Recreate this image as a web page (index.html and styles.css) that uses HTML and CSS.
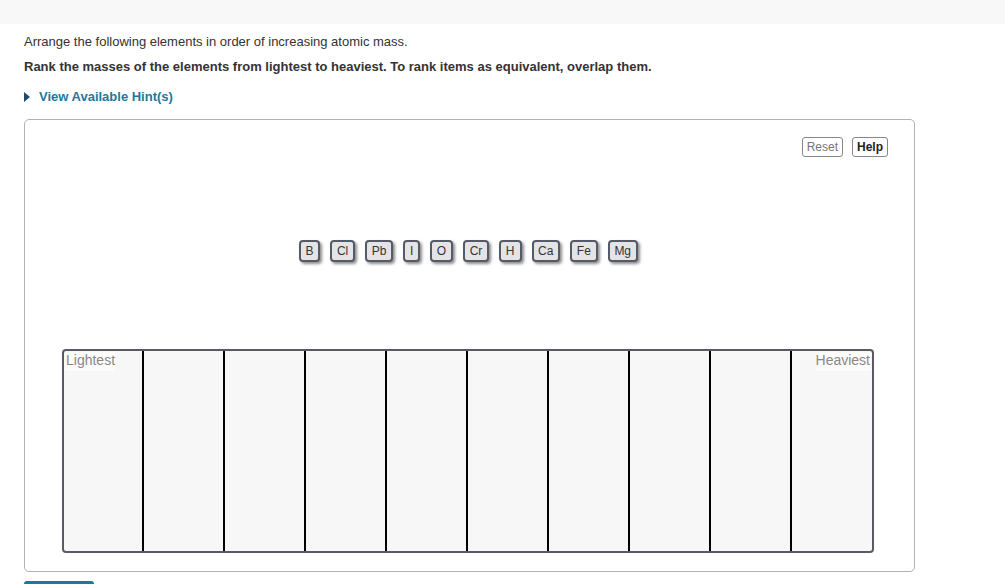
FILE: index.html
```html
<!DOCTYPE html>
<html>
<head>
<meta charset="utf-8">
<link rel="stylesheet" href="styles.css">
</head>
<body>
<div class="topbar"></div>
<div class="content">
  <p class="intro">Arrange the following elements in order of increasing atomic mass.</p>
  <p class="task">Rank the masses of the elements from lightest to heaviest. To rank items as equivalent, overlap them.</p>
  <div class="hint"><span class="tri"></span><span>View Available Hint(s)</span></div>
  <div class="panel">
    <div class="tools">
      <button class="btn reset">Reset</button>
      <button class="btn help">Help</button>
    </div>
    <div class="tiles">
      <span class="tile">B</span>
      <span class="tile">Cl</span>
      <span class="tile">Pb</span>
      <span class="tile">I</span>
      <span class="tile">O</span>
      <span class="tile">Cr</span>
      <span class="tile">H</span>
      <span class="tile">Ca</span>
      <span class="tile">Fe</span>
      <span class="tile">Mg</span>
    </div>
    <div class="rank">
      <div class="cell"><span class="lbl">Lightest</span></div>
      <div class="cell"></div>
      <div class="cell"></div>
      <div class="cell"></div>
      <div class="cell"></div>
      <div class="cell"></div>
      <div class="cell"></div>
      <div class="cell"></div>
      <div class="cell"></div>
      <div class="cell last"><span class="lbl right">Heaviest</span></div>
    </div>
  </div>
  <div class="submit"></div>
</div>
</body>
</html>
```

FILE: styles.css
```css
html, body {
  margin: 0;
  padding: 0;
  background: #fff;
  font-family: "Liberation Sans", Arial, sans-serif;
  color: #333;
  overflow: hidden;
}
.topbar {
  height: 24px;
  background: #f8f8f8;
}
.content {
  padding-left: 24px;
}
.intro {
  margin: 10px 0 0 0;
  font-size: 13px;
  line-height: 16px;
}
.task {
  margin: 9px 0 0 0;
  font-size: 13px;
  font-weight: bold;
  line-height: 16px;
}
.hint {
  margin-top: 14px;
  display: flex;
  align-items: center;
  gap: 9px;
  color: #1b7a9c;
  font-weight: bold;
  font-size: 13px;
  line-height: 16px;
}
.tri {
  width: 0;
  height: 0;
  border-top: 5px solid transparent;
  border-bottom: 5px solid transparent;
  border-left: 6px solid #1d4d6d;
}
.panel {
  margin-top: 14px;
  width: 889px;
  height: 451px;
  border: 1px solid #b3b3b3;
  border-radius: 5px;
  display: flex;
  flex-direction: column;
  align-items: center;
}
.tools {
  align-self: flex-end;
  margin: 17px 26px 0 0;
  display: flex;
  gap: 9px;
}
.btn {
  height: 20px;
  padding: 0 4px;
  border: 1px solid #888;
  border-radius: 3px;
  background: #fff;
  font-family: "Liberation Sans", Arial, sans-serif;
  font-size: 12px;
  font-weight: bold;
  line-height: 18px;
}
.reset { color: #777; font-weight: normal; }
.help { color: #222; }
.tiles {
  margin-top: 83px;
  display: flex;
  gap: 10px;
  margin-left: -2px;
}
.tile {
  display: inline-block;
  height: 18px;
  padding: 0 5px 0 4.5px;
  border: 2px solid #555a68;
  border-radius: 4px;
  background: #e4e4e4;
  font-size: 12px;
  line-height: 18px;
  color: #333;
  box-shadow: 2px 2px 3px rgba(0,0,0,0.45);
}
.rank {
  margin-top: 87px;
  width: 808px;
  height: 200px;
  border: 2px solid #5a5a66;
  border-radius: 4px;
  background: #f7f7f7;
  display: grid;
  grid-template-columns: 80px repeat(8, 81px) 80px;
  margin-left: -3px;
}
.cell {
  border-right: 2px solid #000;
  position: relative;
}
.cell.last { border-right: none; }
.lbl {
  position: absolute;
  top: 1px;
  left: 1px;
  padding: 0 0 3px 1px;
  font-size: 14px;
  line-height: 16px;
  color: #888;
  background: #fcfcfc;
}
.lbl.right {
  left: auto;
  right: 1px;
  padding: 0 1px 3px 0;
}
.submit {
  margin-top: 9px;
  width: 70px;
  height: 20px;
  background: #1b7a9c;
  border-radius: 3px 3px 0 0;
}
```
